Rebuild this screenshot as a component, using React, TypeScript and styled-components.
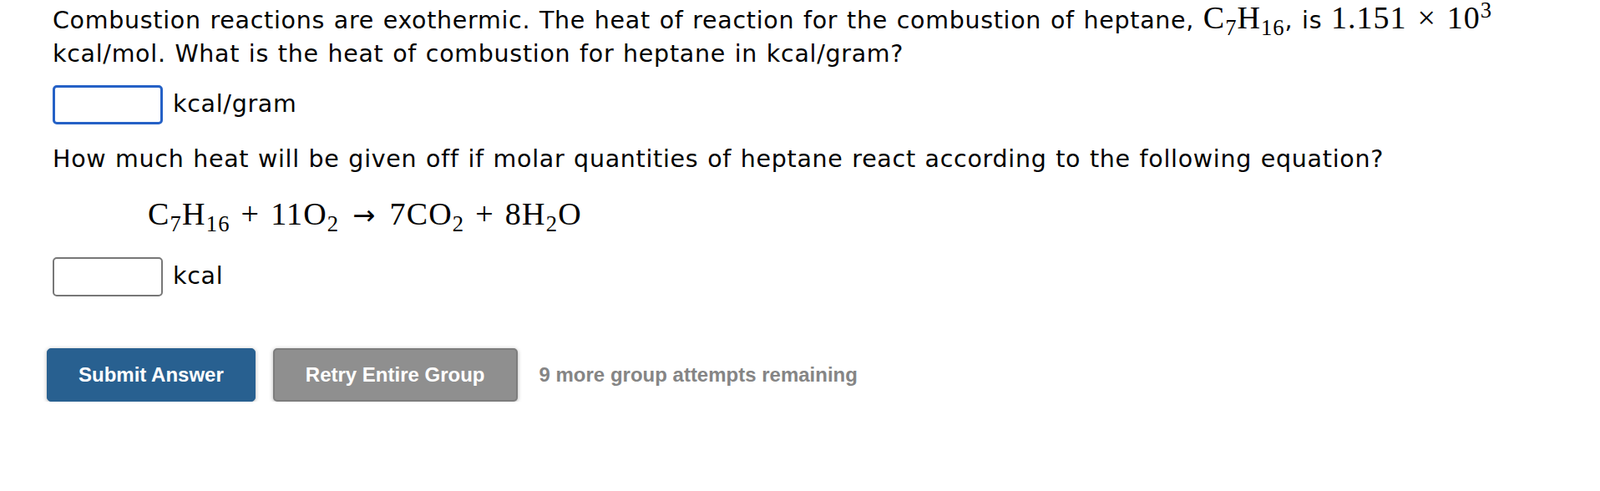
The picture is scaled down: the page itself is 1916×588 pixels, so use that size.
import React from 'react'
import styled, { createGlobalStyle } from 'styled-components'

interface InputProps {
  focused?: boolean
}

interface OpProps {
  rel?: boolean
}

interface ButtonProps {
  primary?: boolean
}

const GlobalStyle = createGlobalStyle`
  body {
    margin: 0;
    background: #ffffff;
  }
`

const Page = styled.div`
  padding: 2px 56px 0;
  font-family: "DejaVu Sans", Verdana, sans-serif;
  font-size: 28.5px;
  letter-spacing: 0.7px;
  word-spacing: 1px;
  line-height: 40px;
  color: #000000;
`

const QuestionText = styled.p<{ gap?: number }>`
  margin: ${props => props.gap || 0}px 0 0 7px;
`

const AnswerRow = styled.div`
  display: flex;
  align-items: center;
  gap: 12px;
  margin: 17px 0 0 7px;
`

const AnswerRowLower = styled(AnswerRow)`
  margin-top: 26px;
`

const AnswerInput = styled.input<InputProps>`
  box-sizing: border-box;
  width: 132px;
  height: 47px;
  border: ${props => props.focused ? '3px solid #2561c6' : '2px solid #777777'};
  border-radius: 5px;
  outline: none;
  background: #ffffff;
  font: inherit;
`

const Unit = styled.span`
  position: relative;
  top: -1px;
`

const MathText = styled.span`
  font-family: "Liberation Serif", "Times New Roman", serif;
  font-size: 38px;
  letter-spacing: 1px;
  line-height: 1;
  white-space: nowrap;
`

const Sub = styled.sub`
  font-size: 0.7em;
  line-height: 0;
  vertical-align: -0.3em;
`

const Sup = styled.sup`
  font-size: 0.7em;
  line-height: 0;
  vertical-align: 0.5em;
`

const Op = styled.span<OpProps>`
  margin: 0 ${props => props.rel ? '0.42em' : '0.34em'};
`

const Arrow = styled.span`
  font-family: "DejaVu Sans", sans-serif;
  font-size: 0.85em;
`

const Equation = styled.div`
  margin: 21px 0 0 121px;
  font-family: "Liberation Serif", "Times New Roman", serif;
  font-size: 38px;
  letter-spacing: 1.2px;
  line-height: 48px;
  white-space: nowrap;
`

const ButtonRow = styled.div`
  display: flex;
  align-items: center;
  gap: 21px;
  margin-top: 62px;
  font-family: "Liberation Sans", Arial, sans-serif;
  font-weight: bold;
  font-size: 24px;
  letter-spacing: 0;
  word-spacing: 0;
`

const Button = styled.button<ButtonProps>`
  box-sizing: border-box;
  height: 64px;
  padding: 0 37px;
  border: ${props => props.primary ? '1px solid #286090' : '2px solid #7d7d7d'};
  border-radius: 5px;
  background: ${props => props.primary ? '#286090' : '#8f8f8f'};
  color: #ffffff;
  font: inherit;
  box-shadow: 0 1px 5px rgba(0, 0, 0, 0.3);
  cursor: pointer;
`

const Attempts = styled.span`
  margin-left: 5px;
  color: #858585;
`

const App = () => {
  return (
    <Page>
      <GlobalStyle />
      <QuestionText>
        Combustion reactions are exothermic. The heat of reaction for the combustion of heptane,{' '}
        <MathText>C<Sub>7</Sub>H<Sub>16</Sub></MathText>, is{' '}
        <MathText>1.151<Op>×</Op>10<Sup>3</Sup></MathText> kcal/mol. What is the heat of
        combustion for heptane in kcal/gram?
      </QuestionText>
      <AnswerRow>
        <AnswerInput focused type="text" />
        <Unit>kcal/gram</Unit>
      </AnswerRow>
      <QuestionText gap={22}>
        How much heat will be given off if molar quantities of heptane react according to the following equation?
      </QuestionText>
      <Equation>
        C<Sub>7</Sub>H<Sub>16</Sub>
        <Op>+</Op>11O<Sub>2</Sub>
        <Op rel><Arrow>→</Arrow></Op>7CO<Sub>2</Sub>
        <Op>+</Op>8H<Sub>2</Sub>O
      </Equation>
      <AnswerRowLower>
        <AnswerInput type="text" />
        <Unit>kcal</Unit>
      </AnswerRowLower>
      <ButtonRow>
        <Button primary>Submit Answer</Button>
        <Button>Retry Entire Group</Button>
        <Attempts>9 more group attempts remaining</Attempts>
      </ButtonRow>
    </Page>
  )
}

export default App
